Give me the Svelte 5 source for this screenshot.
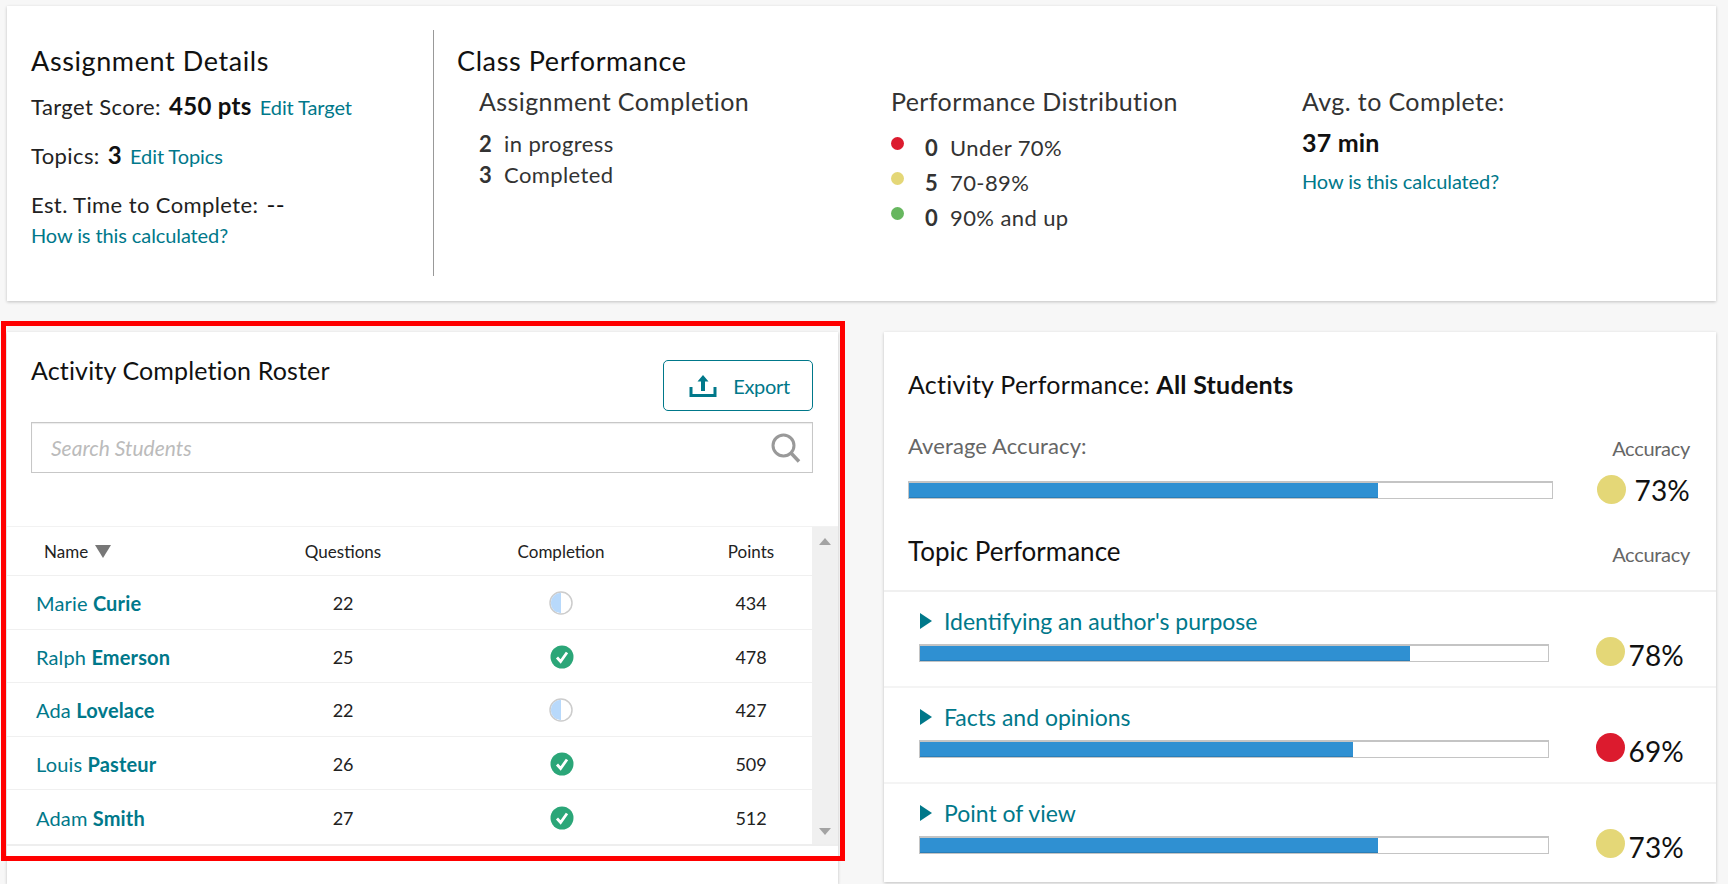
<script>
  const students = [
    { first: 'Marie', last: 'Curie', questions: 22, done: false, points: 434 },
    { first: 'Ralph', last: 'Emerson', questions: 25, done: true, points: 478 },
    { first: 'Ada', last: 'Lovelace', questions: 22, done: false, points: 427 },
    { first: 'Louis', last: 'Pasteur', questions: 26, done: true, points: 509 },
    { first: 'Adam', last: 'Smith', questions: 27, done: true, points: 512 }
  ];

  const topics = [
    { name: "Identifying an author's purpose", pct: 78, color: 'yellow' },
    { name: 'Facts and opinions', pct: 69, color: 'red' },
    { name: 'Point of view', pct: 73, color: 'yellow' }
  ];

  const dist = [
    { color: 'red', count: 0, label: 'Under 70%' },
    { color: 'yellow', count: 5, label: '70-89%' },
    { color: 'green', count: 0, label: '90% and up' }
  ];
</script>

<div class="page">
  <section class="summary">
    <div class="details">
      <h2>Assignment Details</h2>
      <p class="target">Target Score: <b class="val">450 pts</b> <a href="#top">Edit Target</a></p>
      <p class="topics">Topics: <b class="val">3</b> <a href="#top">Edit Topics</a></p>
      <p class="est">Est. Time to Complete: <b class="val dash">--</b></p>
      <p><a href="#top">How is this calculated?</a></p>
    </div>
    <div class="class-perf">
      <h2>Class Performance</h2>
      <div class="stats">
        <div>
          <h3>Assignment Completion</h3>
          <ul class="completion">
            <li><span class="num">2</span>in progress</li>
            <li><span class="num">3</span>Completed</li>
          </ul>
        </div>
        <div>
          <h3>Performance Distribution</h3>
          <ul class="distribution">
            {#each dist as d}
              <li><i class="mini {d.color}"></i><span class="num">{d.count}</span>{d.label}</li>
            {/each}
          </ul>
        </div>
        <div>
          <h3>Avg. to Complete:</h3>
          <p class="avg">37 min</p>
          <p class="avg-link"><a href="#top">How is this calculated?</a></p>
        </div>
      </div>
    </div>
  </section>

  <div class="columns">
    <section class="roster">
      <div class="roster-head">
        <h2 class="roster-title">Activity Completion Roster</h2>
        <button class="export">
          <svg width="28" height="24" viewBox="0 0 28 24">
            <path d="M14 1 L19.5 7.5 H16 V17 H12 V7.5 H8.5 Z" fill="#00788a" />
            <path d="M2 13 V21.5 H26 V13" fill="none" stroke="#00788a" stroke-width="3" />
          </svg>
          Export
        </button>
      </div>
      <div class="search">
        <span>Search Students</span>
        <svg width="32" height="32" viewBox="0 0 32 32">
          <circle cx="13.5" cy="13.5" r="10.5" fill="none" stroke="#999" stroke-width="3" />
          <path d="M21 21 L29 29.5" stroke="#999" stroke-width="3.5" />
        </svg>
      </div>
      <div class="table">
        <div class="rows">
          <div class="row header">
            <div class="name-h">Name <i class="sort"></i></div>
            <div>Questions</div>
            <div>Completion</div>
            <div class="pts">Points</div>
          </div>
          {#each students as s}
            <div class="row">
              <div class="name">{s.first} <b>{s.last}</b></div>
              <div>{s.questions}</div>
              <div class="status">
                {#if s.done}
                  <svg width="24" height="24" viewBox="0 0 24 24">
                    <circle cx="12" cy="12" r="11.5" fill="#2ba678" />
                    <path d="M7 12.5 L10.6 16.5 L17 7.5" fill="none" stroke="#fff" stroke-width="2.8" />
                  </svg>
                {:else}
                  <svg class="half" width="24" height="24" viewBox="0 0 24 24">
                    <circle cx="12" cy="12" r="11" fill="#fff" stroke="#ccc" stroke-width="1.5" />
                    <path d="M12 1.8 A10.2 10.2 0 0 0 12 22.2 Z" fill="#b8d9fb" />
                  </svg>
                {/if}
              </div>
              <div class="pts">{s.points}</div>
            </div>
          {/each}
        </div>
        <div class="scrollbar">
          <i class="arrow up"></i>
          <i class="arrow down"></i>
        </div>
      </div>
    </section>

    <section class="activity">
      <div class="activity-top">
        <h2 class="activity-title">Activity Performance: <b>All Students</b></h2>
        <div class="avg-labels">
          <span class="avg-acc">Average Accuracy:</span>
          <span class="acc">Accuracy</span>
        </div>
        <div class="meter overall">
          <div class="bar"><div class="fill" style="width: 73%"></div></div>
          <i class="dot yellow"></i>
          <span class="pct">73%</span>
        </div>
        <div class="topic-head">
          <h2 class="topic-title">Topic Performance</h2>
          <span class="acc">Accuracy</span>
        </div>
      </div>
      {#each topics as t}
        <div class="topic">
          <div class="topic-name"><i class="caret"></i>{t.name}</div>
          <div class="meter">
            <div class="bar"><div class="fill" style="width: {t.pct}%"></div></div>
            <i class="dot {t.color}"></i>
            <span class="pct">{t.pct}%</span>
          </div>
        </div>
      {/each}
    </section>
  </div>

  <div class="highlight"></div>
</div>

<style>
  :global(body) {
    margin: 0;
    background: #f7f7f7;
    font-family: Lato, 'Open Sans', sans-serif;
    color: #222;
    overflow: hidden;
  }

  .page {
    position: relative;
    height: 884px;
    padding-top: 6px;
    box-sizing: border-box;
  }

  h2, h3, p, ul {
    margin: 0;
    padding: 0;
    font-weight: 400;
    list-style: none;
  }

  a {
    color: #00788a;
    text-decoration: none;
    font-size: 20px;
    letter-spacing: -0.1px;
  }

  .summary {
    display: flex;
    margin-left: 7px;
    width: 1709px;
    height: 295px;
    box-sizing: border-box;
    padding: 24px 0 0 24px;
    background: #fff;
    box-shadow: 0 1px 3px rgba(0, 0, 0, 0.22);
  }

  .summary h2 {
    font-size: 27px;
    line-height: 32px;
    color: #111;
    letter-spacing: 0.6px;
  }

  .details {
    height: 246px;
    padding-top: 15px;
    box-sizing: border-box;
    border-right: 1px solid #999;
    flex: none;
    width: 403px;
  }

  .details p {
    font-size: 22px;
    line-height: 30px;
    letter-spacing: 0.4px;
  }

  .val {
    font-weight: 700;
    font-size: 24px;
    color: #111;
    margin: 0 2px;
    letter-spacing: 0.3px;
  }

  .dash {
    font-weight: 400;
  }

  .target { margin-top: 14px; }
  .topics { margin-top: 18px; }
  .est { margin-top: 18px; }

  .class-perf {
    padding: 15px 0 0 23px;
    flex: 1;
  }

  .stats {
    display: grid;
    grid-template-columns: 412px 411px 1fr;
    padding-left: 22px;
  }

  .stats h3 {
    font-size: 25px;
    line-height: 30px;
    margin-top: 9px;
    color: #333;
    letter-spacing: 0.4px;
  }

  .completion, .distribution {
    font-size: 22px;
    letter-spacing: 0.4px;
    color: #333;
  }

  .completion {
    margin-top: 13px;
  }

  .distribution {
    margin-top: 14px;
  }

  .completion li {
    height: 31px;
    line-height: 30px;
  }

  .completion .num {
    display: inline-block;
    width: 25px;
    font-weight: 700;
  }

  .distribution li {
    display: flex;
    align-items: center;
    height: 35px;
  }

  .distribution .num {
    width: 25px;
    font-weight: 700;
  }

  .mini {
    width: 13px;
    height: 13px;
    border-radius: 50%;
    margin: -8px 21px 0 0;
  }

  .red { background: #dc1b2e; }
  .yellow { background: #e4d777; }
  .green { background: #67b75f; }

  .avg {
    margin-top: 10px;
    font-size: 25px;
    line-height: 32px;
    font-weight: 700;
    color: #111;
    letter-spacing: 0.2px;
  }

  .avg-link {
    margin-top: 8px;
    line-height: 30px;
  }

  .columns {
    display: flex;
    margin: 31px 0 0 7px;
    align-items: flex-start;
  }

  .roster {
    width: 831px;
    height: 552px;
    background: #fff;
    box-shadow: 0 1px 3px rgba(0, 0, 0, 0.22);
    flex: none;
  }

  .roster-head {
    display: flex;
    justify-content: space-between;
    padding: 28px 25px 0 24px;
  }

  .roster-title {
    font-size: 25px;
    line-height: 24px;
    margin-top: -2px;
    color: #111;
    letter-spacing: 0.15px;
  }

  .export {
    display: flex;
    align-items: center;
    justify-content: center;
    gap: 16px;
    width: 150px;
    height: 51px;
    box-sizing: border-box;
    background: #fff;
    border: 1.5px solid #00788a;
    border-radius: 5px;
    color: #00788a;
    font-family: inherit;
    font-size: 20px;
    letter-spacing: -0.3px;
    padding: 0 0 0 3px;
  }

  .search {
    display: flex;
    align-items: center;
    justify-content: space-between;
    margin: 11px 25px 0 24px;
    height: 51px;
    box-sizing: border-box;
    border: 1px solid #c7c7c7;
    box-shadow: inset 0 1px 1px rgba(0, 0, 0, 0.08);
    padding: 0 10px 0 19px;
    font-size: 21px;
    font-style: italic;
    color: #bbb;
  }

  .table {
    display: flex;
    margin-top: 53px;
    border-top: 1px solid #f2f2f2;
    border-bottom: 2px solid #eee;
  }

  .rows {
    width: 805px;
    flex: none;
  }

  .row {
    display: grid;
    grid-template-columns: 245px 182px 254px 124px;
    align-items: center;
    height: 53.5px;
    box-sizing: border-box;
    padding-top: 2px;
    border-bottom: 1px solid #f0f0f0;
    text-align: center;
    font-size: 18px;
    letter-spacing: -0.1px;
    color: #222;
  }

  .row:last-child {
    border-bottom: none;
  }

  .header {
    height: 49px;
    padding-top: 0;
    font-size: 17px;
    letter-spacing: 0;
  }

  .pts {
    padding-left: 2px;
  }

  .name-h {
    text-align: left;
    padding-left: 37px;
    display: flex;
    align-items: center;
    gap: 7px;
  }

  .sort {
    width: 0;
    height: 0;
    border-left: 8px solid transparent;
    border-right: 8px solid transparent;
    border-top: 13px solid #777;
  }

  .name {
    text-align: left;
    padding-left: 29px;
    color: #00788a;
    font-size: 20px;
    letter-spacing: 0.15px;
  }

  .status {
    display: flex;
    justify-content: center;
    padding-left: 2px;
  }

  .half {
    margin-left: -2px;
  }

  .scrollbar {
    flex: 1;
    background: #f0f0f0;
    display: flex;
    flex-direction: column;
    align-items: center;
    justify-content: space-between;
    padding: 11px 0 9px;
  }

  .arrow {
    width: 0;
    height: 0;
    border-left: 6px solid transparent;
    border-right: 6px solid transparent;
  }

  .up { border-bottom: 7px solid #a3a3a3; }
  .down { border-top: 7px solid #a3a3a3; }

  .activity {
    width: 832px;
    height: 550px;
    margin-left: 46px;
    background: #fff;
    box-shadow: 0 1px 3px rgba(0, 0, 0, 0.22);
    flex: none;
  }

  .activity-top {
    padding: 35px 26px 0 24px;
    height: 260px;
    box-sizing: border-box;
    border-bottom: 2px solid #f0f0f0;
  }

  .activity-title {
    font-size: 25px;
    line-height: 34px;
    color: #111;
    letter-spacing: 0.25px;
  }

  .activity-title b {
    font-weight: 700;
  }

  .avg-labels {
    display: flex;
    justify-content: space-between;
    align-items: flex-end;
    margin-top: 33px;
    height: 32px;
  }

  .avg-acc {
    font-size: 22px;
    line-height: 28px;
    color: #666;
    letter-spacing: 0.1px;
    margin-bottom: 6px;
  }

  .acc {
    font-size: 20px;
    line-height: 26px;
    color: #666;
    letter-spacing: -0.3px;
    margin-bottom: 1px;
  }

  .avg-labels .acc {
    margin-bottom: 5px;
  }

  .meter {
    display: flex;
    align-items: center;
    height: 29px;
  }

  .overall {
    margin-top: 9px;
  }

  .bar {
    width: 645px;
    height: 18px;
    box-sizing: border-box;
    border: 1px solid #c4c4c4;
    border-top-width: 2px;
    background: #fff;
    flex: none;
  }

  .fill {
    height: 100%;
    background: #2f90d2;
    box-shadow: inset 0 -1px 0 rgba(0, 0, 0, 0.12);
  }

  .dot {
    width: 29px;
    height: 29px;
    border-radius: 50%;
    flex: none;
    margin-left: 44px;
  }

  .pct {
    margin-left: auto;
    font-size: 28px;
    color: #111;
    letter-spacing: 0.2px;
  }

  .topic-head {
    display: flex;
    justify-content: space-between;
    align-items: flex-end;
    margin-top: 30px;
  }

  .topic-title {
    font-size: 26px;
    line-height: 34px;
    color: #111;
  }

  .topic {
    height: 96px;
    box-sizing: border-box;
    padding: 13px 32px 0 35px;
    border-bottom: 2px solid #f4f4f4;
  }

  .topic:last-child {
    border-bottom: none;
  }

  .topic-name {
    display: flex;
    align-items: center;
    gap: 12px;
    height: 32px;
    font-size: 23px;
    color: #00788a;
  }

  .caret {
    width: 0;
    height: 0;
    margin-left: 1px;
    border-top: 8.5px solid transparent;
    border-bottom: 8.5px solid transparent;
    border-left: 12px solid #00788a;
  }

  .topic .meter {
    margin-top: 1.5px;
  }

  .topic .bar {
    width: 630px;
  }

  .topic .dot {
    margin-left: 47px;
    margin-top: -3px;
  }

  .topic .pct {
    margin-top: 3px;
  }

  .highlight {
    position: absolute;
    left: 1px;
    top: 321px;
    width: 844px;
    height: 540px;
    box-sizing: border-box;
    border: 5px solid #ff0000;
    pointer-events: none;
  }
</style>
